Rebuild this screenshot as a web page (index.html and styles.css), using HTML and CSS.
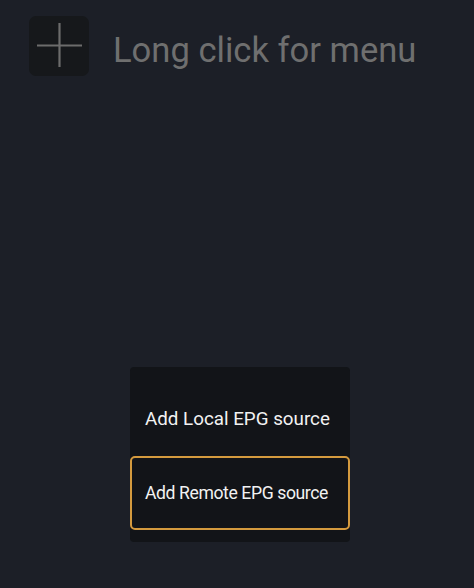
FILE: index.html
```html
<!DOCTYPE html>
<html>
<head>
<meta charset="utf-8">
<link rel="stylesheet" href="styles.css">
</head>
<body>
<div class="screen">
  <div class="header">
    <div class="add-btn">
      <svg width="60" height="60" viewBox="0 0 60 60">
        <path d="M8 29.5H53M30.5 7V51" stroke="#6c6c6c" stroke-width="2.2" fill="none"/>
      </svg>
    </div>
    <div class="hint">Long click for menu</div>
  </div>
  <div class="menu">
    <div class="item">Add Local EPG source</div>
    <div class="item focused">Add Remote EPG source</div>
  </div>
</div>
</body>
</html>
```
FILE: styles.css
```css
html, body {
  margin: 0;
  padding: 0;
  background: #1c1f27;
}
.screen {
  width: 474px;
  height: 588px;
  box-sizing: border-box;
  padding: 16px 0 0 29px;
  font-family: Roboto, "Noto Sans", sans-serif;
  display: flex;
  flex-direction: column;
}
.header {
  display: flex;
  align-items: flex-start;
  gap: 24px;
  height: 60px;
}
.add-btn {
  width: 60px;
  height: 60px;
  border-radius: 7px;
  background: #16181b;
  display: flex;
}
.hint {
  color: #6f6f6f;
  font-size: 34.6px;
  line-height: 40px;
  margin-top: 14px;
  white-space: nowrap;
}
.menu {
  margin-top: 291px;
  margin-left: 101px;
  width: 220px;
  background: #121418;
  border-radius: 4px;
  padding: 15px 0 12px;
  box-sizing: border-box;
}
.item {
  height: 74px;
  box-sizing: border-box;
  border: 2px solid transparent;
  border-radius: 5px;
  padding-left: 13px;
  display: flex;
  align-items: center;
  color: #f2f2f2;
  font-size: 18.8px;
  white-space: nowrap;
}
.focused {
  border-color: #d49a3e;
  font-size: 17.6px;
  letter-spacing: -0.4px;
}
```
